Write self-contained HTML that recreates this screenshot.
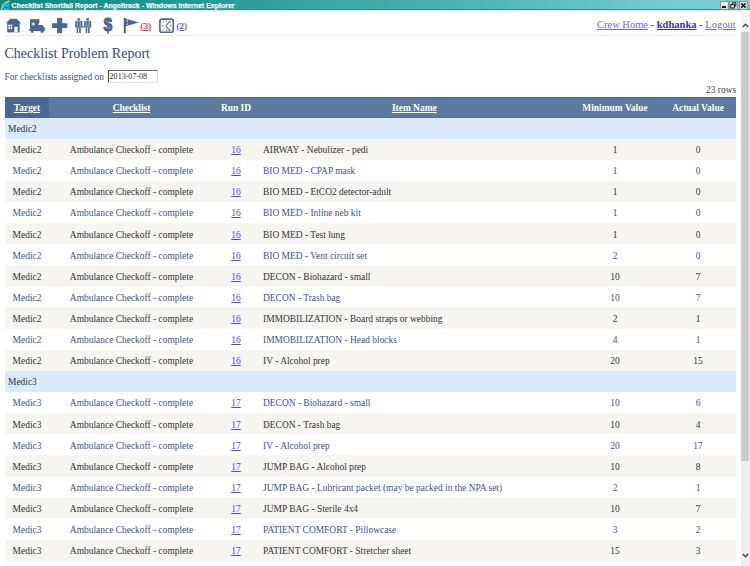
<!DOCTYPE html><html><head><meta charset="utf-8"><style>
*{margin:0;padding:0;box-sizing:border-box}
html,body{width:750px;height:566px;overflow:hidden;background:#fff}
body{position:relative;font-family:"Liberation Serif",serif;color:#333}
.a{position:absolute;white-space:nowrap}
#tb{position:absolute;left:0;top:0;width:750px;height:10px;background:linear-gradient(90deg,#0f887e 0%,#2a9c98 30%,#4db3b6 62%,#6ec8d0 85%,#80d2da 100%);}
#tb:after{content:"";position:absolute;left:0;right:0;top:9px;height:1px;background:#3f8c8e}
#tb:before{content:"";position:absolute;left:0;right:0;top:10px;height:1px;background:#d6e6e8}
#tt{position:absolute;left:11.6px;top:0.5px;font-family:"Liberation Sans",sans-serif;font-weight:bold;font-size:7px;line-height:9px;color:#e8fbf4;-webkit-text-stroke:0.25px #e8fbf4}
.txt{font-size:9.45px;line-height:12px}
.hd{font-weight:bold;color:#fff;font-size:9.45px;line-height:12px}
.hd u{text-decoration:underline}
.beige{background:#f5f4f0}
.lnk{color:#4a4ec4;text-decoration:underline}
.blue{color:#2f4b7c}
</style></head><body>
<div id="tb"></div>
<svg class="a" style="left:0px;top:0px" width="11" height="10" viewBox="0 0 11 10"><path d="M1.4 9.6 Q2.2 3.2 9.5 1" stroke="#a9dc8c" stroke-width="1.5" fill="none"/><path d="M8.9 7.6 A2.8 2.8 0 1 1 9 5.7 H3.6" stroke="#3cb2f0" stroke-width="1.4" fill="none"/></svg>
<div id="tt">Checklist Shortfall Report - Angeltrack - Windows Internet Explorer</div>
<div class="a" style="left:720px;top:1px;width:8.6px;height:8.6px;background:linear-gradient(#f8f6f0,#d8d4c8);border:0.6px solid #7a9a9a"></div>
<div class="a" style="left:729px;top:1px;width:8.6px;height:8.6px;background:linear-gradient(#f8f6f0,#d8d4c8);border:0.6px solid #7a9a9a"></div>
<div class="a" style="left:739.3px;top:1px;width:8.8px;height:8.6px;background:linear-gradient(#f8f6f0,#d8d4c8);border:0.6px solid #7a9a9a"></div>
<div class="a" style="left:722px;top:6.3px;width:3.5px;height:1.6px;background:#222"></div>
<svg class="a" style="left:729px;top:1px" width="9" height="9" viewBox="0 0 9 9"><rect x="3.2" y="1.8" width="3.6" height="3.2" fill="none" stroke="#222" stroke-width="1.1"/><rect x="1.8" y="3.6" width="3.6" height="3.4" fill="#f0eee8" stroke="#222" stroke-width="1.1"/></svg>
<svg class="a" style="left:739.3px;top:1px" width="9" height="9" viewBox="0 0 9 9"><path d="M2.2 2.3 L6.6 6.6 M6.6 2.3 L2.2 6.6" stroke="#111" stroke-width="1.5"/></svg>
<div class="a" style="left:741px;top:10px;width:9px;height:556px;background:#efefef"></div>
<div class="a" style="left:741px;top:32px;width:7.6px;height:429px;background:#cbcbcb"></div>
<div class="a" style="left:741px;top:10px;width:9px;height:22px;background:#f5f5f5"></div>
<svg class="a" style="left:741px;top:21px" width="9" height="9"><path d="M1.8 6 L4.5 3.3 L7.2 6" stroke="#444" stroke-width="1.4" fill="none"/></svg>
<svg class="a" style="left:741px;top:551px" width="9" height="9"><path d="M1.8 3 L4.5 5.7 L7.2 3" stroke="#444" stroke-width="1.4" fill="none"/></svg>
<svg class="a" style="left:0;top:12px" width="200" height="24" viewBox="0 12 200 24">
<g fill="#4a6790">
<path d="M5.6 23.2 L10.5 18.8 L16.5 18.8 L21.2 23.2 Z"/>
<rect x="7.2" y="23" width="12.4" height="9.4"/>
</g>
<g fill="#fff">
<rect x="8.4" y="24.6" width="1.6" height="2"/><rect x="10.6" y="24.6" width="1.6" height="2"/>
<rect x="8.4" y="27.2" width="1.6" height="2"/><rect x="10.6" y="27.2" width="1.6" height="2"/>
<rect x="14.4" y="26.8" width="3.2" height="5.6"/>
</g>
<g fill="#4a6790">
<rect x="30" y="19.2" width="9.4" height="11"/>
<path d="M39 25 L42.5 25 L44.8 28 L44.8 31 L30 31 L28.6 30 L30 29 Z"/>
<circle cx="32.2" cy="31.6" r="1.4"/><circle cx="42" cy="31.6" r="1.4"/>
</g>
<g fill="#fff"><path d="M33.2 22.3 V25.7 M31.5 24 H34.9" stroke="#fff" stroke-width="1"/><circle cx="39.3" cy="24" r="0.9"/></g>
<g fill="#4a6790">
<rect x="57" y="18" width="5.2" height="15.2"/><rect x="52" y="23.2" width="15.2" height="4.8"/>
</g>
<g fill="#4a6790">
<rect x="77.3" y="18.2" width="2.9" height="2.2" rx="0.6"/>
<path d="M75.8 20.8 H81.6 L82.2 27.4 H75.2 Z" fill="#8aa0bc"/>
<rect x="75.3" y="21" width="1.3" height="6.4"/><rect x="81" y="21" width="1.3" height="6.4"/>
<rect x="78.2" y="20.8" width="1.3" height="6.6"/>
<rect x="76.7" y="27.2" width="1.6" height="5.9"/><rect x="79.2" y="27.2" width="1.6" height="5.9"/>
<rect x="86.2" y="18.2" width="2.9" height="2.2" rx="0.6"/>
<path d="M84.7 20.8 H90.5 L91.1 27.4 H84.1 Z" fill="#8aa0bc"/>
<rect x="84.2" y="21" width="1.3" height="6.4"/><rect x="89.9" y="21" width="1.3" height="6.4"/>
<rect x="87.1" y="20.8" width="1.3" height="6.6"/>
<rect x="85.6" y="27.2" width="1.6" height="5.9"/><rect x="88.1" y="27.2" width="1.6" height="5.9"/>
<rect x="82" y="26.3" width="2.4" height="1.1"/>
</g>
<text x="0" y="0" font-family="Liberation Sans" font-weight="bold" font-size="15" fill="#4a6790" stroke="#4a6790" stroke-width="0.7" transform="translate(103.4 31.4) scale(1.05 1.22)">$</text>
<g fill="#4a6790"><rect x="123.8" y="18" width="2" height="15.2"/><path d="M124 18 L139 22.5 L124 26.8 Z"/></g><path d="M127.2 19.6 v2.2 M127.2 23.4 v1.6" stroke="#fff" stroke-width="0.8"/>
<rect x="159.9" y="19.1" width="13.4" height="13.2" rx="2" fill="none" stroke="#4a6790" stroke-width="1.6"/>
<g stroke="#4a6790" stroke-width="1"><path d="M163 21.5 v1 M166.6 20.6 v1.4 M170.2 21.5 v1 M162 25.7 h1.4 M170 25.7 h1.4 M163 29.5 v1 M166.6 29.6 v1.4 M170.2 29.5 v1"/><path d="M169.9 21 L165.9 26 L169.9 31" fill="none" stroke-width="1.2"/></g>
</svg>
<div class="a" style="left:140.4px;top:20.5px;font-size:9px;line-height:11px;color:#d03030;text-decoration:underline;-webkit-text-stroke:0.2px #d03030">(3)</div>
<div class="a" style="left:176.6px;top:20.5px;font-size:9px;line-height:11px;color:#5050d0;text-decoration:underline;-webkit-text-stroke:0.2px #5050d0">(2)</div>
<div class="a" style="left:597px;top:18px;font-size:10.5px;line-height:13px;color:#333"><span style="color:#6a6ad0;text-decoration:underline">Crew Home</span> - <b style="color:#3535b8;text-decoration:underline">kdhanka</b> - <span style="color:#6a6ad0;text-decoration:underline">Logout</span></div>
<div class="a" style="left:5px;top:35px;width:731px;height:1px;background:#ebebeb"></div>
<div class="a" style="left:4.5px;top:45px;font-size:14px;line-height:17px;color:#36486a">Checklist Problem Report</div>
<div class="a txt" style="left:4.6px;top:71px;color:#3a4e6e">For checklists assigned on</div>
<div class="a" style="left:108px;top:70px;width:49.5px;height:12.6px;border:1px solid #888;border-top:1.5px solid #666;border-right-color:#e0e0e0;border-bottom-color:#e0e0e0;border-left-color:#444"></div>
<div class="a" style="left:109.6px;top:71px;font-size:8.05px;line-height:11px;color:#2a2a2a">2013-07-08</div>
<div class="a txt" style="left:706px;top:84px;color:#444">23 rows</div>
<div class="a" style="left:5px;top:97.2px;width:731px;height:20.4px;background:#5c7a9e;border-top:1px solid #526c8e;border-bottom:1px solid #566f90"></div>
<div class="a" style="left:5px;top:97.2px;width:44.3px;height:20.4px;background:#4b6890"></div>
<div class="a hd" style="left:-123px;top:102.30000000000001px;width:300px;text-align:center;"><u>Target</u></div>
<div class="a hd" style="left:-18.5px;top:102.30000000000001px;width:300px;text-align:center;"><u>Checklist</u></div>
<div class="a hd" style="left:86px;top:102.30000000000001px;width:300px;text-align:center;">Run ID</div>
<div class="a hd" style="left:264.3px;top:102.30000000000001px;width:300px;text-align:center;"><u>Item Name</u></div>
<div class="a hd" style="left:465px;top:102.30000000000001px;width:300px;text-align:center;">Minimum Value</div>
<div class="a hd" style="left:548px;top:102.30000000000001px;width:300px;text-align:center;">Actual Value</div>
<div class="a" style="left:5px;top:117.5px;width:731px;height:21.31px;background:#dbebfc"></div>
<div class="a txt" style="left:8px;top:123px;color:#333">Medic2</div>
<div class="a" style="left:5px;top:138.61px;width:731px;height:21.31px;background:#f6f5f1"></div>
<div class="a txt" style="left:-123px;top:144px;width:300px;text-align:center;color:#333">Medic2</div>
<div class="a txt" style="left:-18.5px;top:144px;width:300px;text-align:center;color:#333">Ambulance Checkoff - complete</div>
<div class="a txt lnk" style="left:86px;top:144px;width:300px;text-align:center;">16</div>
<div class="a txt" style="left:263px;top:144px;color:#333">AIRWAY - Nebulizer - pedi</div>
<div class="a txt" style="left:465px;top:144px;width:300px;text-align:center;color:#333">1</div>
<div class="a txt" style="left:548px;top:144px;width:300px;text-align:center;color:#333">0</div>
<div class="a txt" style="left:-123px;top:165px;width:300px;text-align:center;color:#405280">Medic2</div>
<div class="a txt" style="left:-18.5px;top:165px;width:300px;text-align:center;color:#405280">Ambulance Checkoff - complete</div>
<div class="a txt lnk" style="left:86px;top:165px;width:300px;text-align:center;">16</div>
<div class="a txt" style="left:263px;top:165px;color:#405280">BIO MED - CPAP mask</div>
<div class="a txt" style="left:465px;top:165px;width:300px;text-align:center;color:#405280">1</div>
<div class="a txt" style="left:548px;top:165px;width:300px;text-align:center;color:#405280">0</div>
<div class="a" style="left:5px;top:180.82999999999998px;width:731px;height:21.31px;background:#f6f5f1"></div>
<div class="a txt" style="left:-123px;top:186px;width:300px;text-align:center;color:#333">Medic2</div>
<div class="a txt" style="left:-18.5px;top:186px;width:300px;text-align:center;color:#333">Ambulance Checkoff - complete</div>
<div class="a txt lnk" style="left:86px;top:186px;width:300px;text-align:center;">16</div>
<div class="a txt" style="left:263px;top:186px;color:#333">BIO MED - EtCO2 detector-adult</div>
<div class="a txt" style="left:465px;top:186px;width:300px;text-align:center;color:#333">1</div>
<div class="a txt" style="left:548px;top:186px;width:300px;text-align:center;color:#333">0</div>
<div class="a txt" style="left:-123px;top:207px;width:300px;text-align:center;color:#405280">Medic2</div>
<div class="a txt" style="left:-18.5px;top:207px;width:300px;text-align:center;color:#405280">Ambulance Checkoff - complete</div>
<div class="a txt lnk" style="left:86px;top:207px;width:300px;text-align:center;">16</div>
<div class="a txt" style="left:263px;top:207px;color:#405280">BIO MED - Inline neb kit</div>
<div class="a txt" style="left:465px;top:207px;width:300px;text-align:center;color:#405280">1</div>
<div class="a txt" style="left:548px;top:207px;width:300px;text-align:center;color:#405280">0</div>
<div class="a" style="left:5px;top:223.05px;width:731px;height:21.31px;background:#f6f5f1"></div>
<div class="a txt" style="left:-123px;top:229px;width:300px;text-align:center;color:#333">Medic2</div>
<div class="a txt" style="left:-18.5px;top:229px;width:300px;text-align:center;color:#333">Ambulance Checkoff - complete</div>
<div class="a txt lnk" style="left:86px;top:229px;width:300px;text-align:center;">16</div>
<div class="a txt" style="left:263px;top:229px;color:#333">BIO MED - Test lung</div>
<div class="a txt" style="left:465px;top:229px;width:300px;text-align:center;color:#333">1</div>
<div class="a txt" style="left:548px;top:229px;width:300px;text-align:center;color:#333">0</div>
<div class="a txt" style="left:-123px;top:250px;width:300px;text-align:center;color:#405280">Medic2</div>
<div class="a txt" style="left:-18.5px;top:250px;width:300px;text-align:center;color:#405280">Ambulance Checkoff - complete</div>
<div class="a txt lnk" style="left:86px;top:250px;width:300px;text-align:center;">16</div>
<div class="a txt" style="left:263px;top:250px;color:#405280">BIO MED - Vent circuit set</div>
<div class="a txt" style="left:465px;top:250px;width:300px;text-align:center;color:#405280">2</div>
<div class="a txt" style="left:548px;top:250px;width:300px;text-align:center;color:#405280">0</div>
<div class="a" style="left:5px;top:265.27px;width:731px;height:21.31px;background:#f6f5f1"></div>
<div class="a txt" style="left:-123px;top:271px;width:300px;text-align:center;color:#333">Medic2</div>
<div class="a txt" style="left:-18.5px;top:271px;width:300px;text-align:center;color:#333">Ambulance Checkoff - complete</div>
<div class="a txt lnk" style="left:86px;top:271px;width:300px;text-align:center;">16</div>
<div class="a txt" style="left:263px;top:271px;color:#333">DECON - Biohazard - small</div>
<div class="a txt" style="left:465px;top:271px;width:300px;text-align:center;color:#333">10</div>
<div class="a txt" style="left:548px;top:271px;width:300px;text-align:center;color:#333">7</div>
<div class="a txt" style="left:-123px;top:292px;width:300px;text-align:center;color:#405280">Medic2</div>
<div class="a txt" style="left:-18.5px;top:292px;width:300px;text-align:center;color:#405280">Ambulance Checkoff - complete</div>
<div class="a txt lnk" style="left:86px;top:292px;width:300px;text-align:center;">16</div>
<div class="a txt" style="left:263px;top:292px;color:#405280">DECON - Trash bag</div>
<div class="a txt" style="left:465px;top:292px;width:300px;text-align:center;color:#405280">10</div>
<div class="a txt" style="left:548px;top:292px;width:300px;text-align:center;color:#405280">7</div>
<div class="a" style="left:5px;top:307.49px;width:731px;height:21.31px;background:#f6f5f1"></div>
<div class="a txt" style="left:-123px;top:313px;width:300px;text-align:center;color:#333">Medic2</div>
<div class="a txt" style="left:-18.5px;top:313px;width:300px;text-align:center;color:#333">Ambulance Checkoff - complete</div>
<div class="a txt lnk" style="left:86px;top:313px;width:300px;text-align:center;">16</div>
<div class="a txt" style="left:263px;top:313px;color:#333">IMMOBILIZATION - Board straps or webbing</div>
<div class="a txt" style="left:465px;top:313px;width:300px;text-align:center;color:#333">2</div>
<div class="a txt" style="left:548px;top:313px;width:300px;text-align:center;color:#333">1</div>
<div class="a txt" style="left:-123px;top:334px;width:300px;text-align:center;color:#405280">Medic2</div>
<div class="a txt" style="left:-18.5px;top:334px;width:300px;text-align:center;color:#405280">Ambulance Checkoff - complete</div>
<div class="a txt lnk" style="left:86px;top:334px;width:300px;text-align:center;">16</div>
<div class="a txt" style="left:263px;top:334px;color:#405280">IMMOBILIZATION - Head blocks</div>
<div class="a txt" style="left:465px;top:334px;width:300px;text-align:center;color:#405280">4</div>
<div class="a txt" style="left:548px;top:334px;width:300px;text-align:center;color:#405280">1</div>
<div class="a" style="left:5px;top:349.71px;width:731px;height:21.31px;background:#f6f5f1"></div>
<div class="a txt" style="left:-123px;top:355px;width:300px;text-align:center;color:#333">Medic2</div>
<div class="a txt" style="left:-18.5px;top:355px;width:300px;text-align:center;color:#333">Ambulance Checkoff - complete</div>
<div class="a txt lnk" style="left:86px;top:355px;width:300px;text-align:center;">16</div>
<div class="a txt" style="left:263px;top:355px;color:#333">IV - Alcohol prep</div>
<div class="a txt" style="left:465px;top:355px;width:300px;text-align:center;color:#333">20</div>
<div class="a txt" style="left:548px;top:355px;width:300px;text-align:center;color:#333">15</div>
<div class="a" style="left:5px;top:370.82px;width:731px;height:21.31px;background:#dbebfc"></div>
<div class="a txt" style="left:8px;top:376px;color:#333">Medic3</div>
<div class="a txt" style="left:-123px;top:397px;width:300px;text-align:center;color:#405280">Medic3</div>
<div class="a txt" style="left:-18.5px;top:397px;width:300px;text-align:center;color:#405280">Ambulance Checkoff - complete</div>
<div class="a txt lnk" style="left:86px;top:397px;width:300px;text-align:center;">17</div>
<div class="a txt" style="left:263px;top:397px;color:#405280">DECON - Biohazard - small</div>
<div class="a txt" style="left:465px;top:397px;width:300px;text-align:center;color:#405280">10</div>
<div class="a txt" style="left:548px;top:397px;width:300px;text-align:center;color:#405280">6</div>
<div class="a" style="left:5px;top:413.03999999999996px;width:731px;height:21.31px;background:#f6f5f1"></div>
<div class="a txt" style="left:-123px;top:419px;width:300px;text-align:center;color:#333">Medic3</div>
<div class="a txt" style="left:-18.5px;top:419px;width:300px;text-align:center;color:#333">Ambulance Checkoff - complete</div>
<div class="a txt lnk" style="left:86px;top:419px;width:300px;text-align:center;">17</div>
<div class="a txt" style="left:263px;top:419px;color:#333">DECON - Trash bag</div>
<div class="a txt" style="left:465px;top:419px;width:300px;text-align:center;color:#333">10</div>
<div class="a txt" style="left:548px;top:419px;width:300px;text-align:center;color:#333">4</div>
<div class="a txt" style="left:-123px;top:440px;width:300px;text-align:center;color:#405280">Medic3</div>
<div class="a txt" style="left:-18.5px;top:440px;width:300px;text-align:center;color:#405280">Ambulance Checkoff - complete</div>
<div class="a txt lnk" style="left:86px;top:440px;width:300px;text-align:center;">17</div>
<div class="a txt" style="left:263px;top:440px;color:#405280">IV - Alcohol prep</div>
<div class="a txt" style="left:465px;top:440px;width:300px;text-align:center;color:#405280">20</div>
<div class="a txt" style="left:548px;top:440px;width:300px;text-align:center;color:#405280">17</div>
<div class="a" style="left:5px;top:455.26px;width:731px;height:21.31px;background:#f6f5f1"></div>
<div class="a txt" style="left:-123px;top:461px;width:300px;text-align:center;color:#333">Medic3</div>
<div class="a txt" style="left:-18.5px;top:461px;width:300px;text-align:center;color:#333">Ambulance Checkoff - complete</div>
<div class="a txt lnk" style="left:86px;top:461px;width:300px;text-align:center;">17</div>
<div class="a txt" style="left:263px;top:461px;color:#333">JUMP BAG - Alcohol prep</div>
<div class="a txt" style="left:465px;top:461px;width:300px;text-align:center;color:#333">10</div>
<div class="a txt" style="left:548px;top:461px;width:300px;text-align:center;color:#333">8</div>
<div class="a txt" style="left:-123px;top:482px;width:300px;text-align:center;color:#405280">Medic3</div>
<div class="a txt" style="left:-18.5px;top:482px;width:300px;text-align:center;color:#405280">Ambulance Checkoff - complete</div>
<div class="a txt lnk" style="left:86px;top:482px;width:300px;text-align:center;">17</div>
<div class="a txt" style="left:263px;top:482px;color:#405280">JUMP BAG - Lubricant packet (may be packed in the NPA set)</div>
<div class="a txt" style="left:465px;top:482px;width:300px;text-align:center;color:#405280">2</div>
<div class="a txt" style="left:548px;top:482px;width:300px;text-align:center;color:#405280">1</div>
<div class="a" style="left:5px;top:497.48px;width:731px;height:21.31px;background:#f6f5f1"></div>
<div class="a txt" style="left:-123px;top:503px;width:300px;text-align:center;color:#333">Medic3</div>
<div class="a txt" style="left:-18.5px;top:503px;width:300px;text-align:center;color:#333">Ambulance Checkoff - complete</div>
<div class="a txt lnk" style="left:86px;top:503px;width:300px;text-align:center;">17</div>
<div class="a txt" style="left:263px;top:503px;color:#333">JUMP BAG - Sterile 4x4</div>
<div class="a txt" style="left:465px;top:503px;width:300px;text-align:center;color:#333">10</div>
<div class="a txt" style="left:548px;top:503px;width:300px;text-align:center;color:#333">7</div>
<div class="a txt" style="left:-123px;top:524px;width:300px;text-align:center;color:#405280">Medic3</div>
<div class="a txt" style="left:-18.5px;top:524px;width:300px;text-align:center;color:#405280">Ambulance Checkoff - complete</div>
<div class="a txt lnk" style="left:86px;top:524px;width:300px;text-align:center;">17</div>
<div class="a txt" style="left:263px;top:524px;color:#405280">PATIENT COMFORT - Pillowcase</div>
<div class="a txt" style="left:465px;top:524px;width:300px;text-align:center;color:#405280">3</div>
<div class="a txt" style="left:548px;top:524px;width:300px;text-align:center;color:#405280">2</div>
<div class="a" style="left:5px;top:539.7px;width:731px;height:21.31px;background:#f6f5f1"></div>
<div class="a txt" style="left:-123px;top:545px;width:300px;text-align:center;color:#333">Medic3</div>
<div class="a txt" style="left:-18.5px;top:545px;width:300px;text-align:center;color:#333">Ambulance Checkoff - complete</div>
<div class="a txt lnk" style="left:86px;top:545px;width:300px;text-align:center;">17</div>
<div class="a txt" style="left:263px;top:545px;color:#333">PATIENT COMFORT - Stretcher sheet</div>
<div class="a txt" style="left:465px;top:545px;width:300px;text-align:center;color:#333">15</div>
<div class="a txt" style="left:548px;top:545px;width:300px;text-align:center;color:#333">3</div>
</body></html>
